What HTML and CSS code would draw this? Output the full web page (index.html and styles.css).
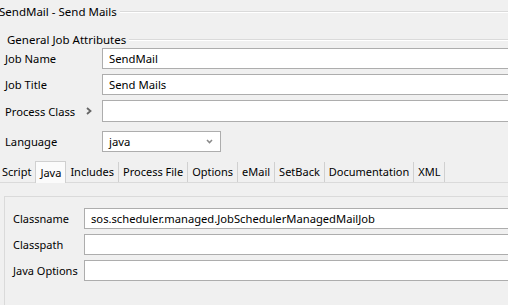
FILE: index.html
```html
<!DOCTYPE html>
<html>
<head>
<meta charset="utf-8">
<link rel="stylesheet" href="styles.css">
</head>
<body>
<div class="page">
  <div class="head">
    <span class="head-text">SendMail - Send Mails</span>
    <span class="etch"></span>
  </div>
  <div class="group-head">
    <span class="group-text">General Job Attributes</span>
    <span class="etch"></span>
  </div>
  <div class="row r1">
    <span class="label">Job Name</span>
    <div class="field">SendMail</div>
  </div>
  <div class="row r2">
    <span class="label">Job Title</span>
    <div class="field">Send Mails</div>
  </div>
  <div class="row r3">
    <span class="label">Process Class<svg class="chev" width="8" height="8" viewBox="0 0 8 8"><path d="M2 1 L5.5 4 L2 7" fill="none" stroke="#666" stroke-width="1.8"/></svg></span>
    <div class="field tall"></div>
  </div>
  <div class="row r4">
    <span class="label">Language</span>
    <div class="select"><span>java</span><svg class="drop" width="7" height="5" viewBox="0 0 7 5"><path d="M1 1 L3.5 3.6 L6 1" fill="none" stroke="#8a8a8a" stroke-width="1.5"/></svg></div>
  </div>
  <div class="tabs">
    <span class="tab">Script</span>
    <span class="tab active">Java</span>
    <span class="tab">Includes</span>
    <span class="tab">Process File</span>
    <span class="tab">Options</span>
    <span class="tab">eMail</span>
    <span class="tab">SetBack</span>
    <span class="tab">Documentation</span>
    <span class="tab">XML</span>
  </div>
  <div class="panel">
    <div class="box">
      <div class="prow">
        <span class="plabel">Classname</span>
        <div class="field">sos.scheduler.managed.JobSchedulerManagedMailJob</div>
      </div>
      <div class="prow">
        <span class="plabel">Classpath</span>
        <div class="field"></div>
      </div>
      <div class="prow">
        <span class="plabel">Java Options</span>
        <div class="field"></div>
      </div>
    </div>
  </div>
</div>
</body>
</html>
```

FILE: styles.css
```css
* { box-sizing: border-box; }
html, body { margin: 0; padding: 0; }
body {
  width: 508px;
  height: 305px;
  overflow: hidden;
  background: #f0f0f0;
  font-family: "Noto Sans", "Open Sans", sans-serif;
  font-size: 11px;
  color: #000;
}
.page { width: 530px; }

.head {
  display: flex;
  align-items: center;
  height: 16px;
  margin-top: 4px;
  margin-left: -1px;
  line-height: 16px;
  font-size: 11.5px;
}
.etch {
  flex: 1;
  height: 2px;
  border-top: 1px solid #dadada;
  border-bottom: 1px solid #ffffff;
  margin-left: 3px;
}
.group-head {
  display: flex;
  align-items: center;
  height: 16px;
  margin-top: 12px;
  padding-left: 7px;
  line-height: 16px;
  font-size: 11.5px;
}

.row {
  display: flex;
  align-items: center;
  height: 21px;
}
.r2, .r3 { margin-top: 5px; }
.r3 { height: 22px; }
.r4 { margin-top: 9px; }
.label {
  width: 102px;
  padding-left: 5px;
  display: flex;
  align-items: center;
  flex: none;
  font-size: 11.2px;
}
.chev { margin-left: 10px; }
.field {
  flex: 1;
  height: 100%;
  background: #fff;
  border: 1px solid #adadad;
  padding-left: 6px;
  line-height: 19px;
  white-space: nowrap;
  font-size: 11.3px;
}
.select {
  width: 119px;
  height: 21px;
  background: #fff;
  border: 1px solid #adadad;
  display: flex;
  align-items: center;
  justify-content: space-between;
  padding: 0 7px 0 6px;
  font-size: 11.3px;
}

.tabs {
  display: flex;
  align-items: flex-end;
  height: 22px;
  margin-top: 9px;
  margin-left: -2px;
  border-bottom: 1px solid #dadada;
}
.tab {
  height: 20px;
  line-height: 19px;
  padding: 0 4px;
  border-right: 1px solid #d0d0d0;
}
.tab.active {
  height: 22px;
  background: #fbfbfb;
  border: 1px solid #d0d0d0;
  border-bottom: none;
  margin-left: -1px;
  line-height: 21px;
  margin-bottom: -1px;
}

.panel {
  padding: 13px 0 0 4px;
}
.box {
  border-top: 1px solid #dadada;
  border-left: 1px solid #dadada;
  height: 120px;
  padding: 11px 0 0 8px;
}
.prow {
  display: flex;
  align-items: center;
  height: 21px;
  margin-bottom: 5px;
}
.plabel {
  min-width: 71px;
  padding-right: 2px;
  flex: none;
}
.prow .field { font-size: 11.2px; }
```
